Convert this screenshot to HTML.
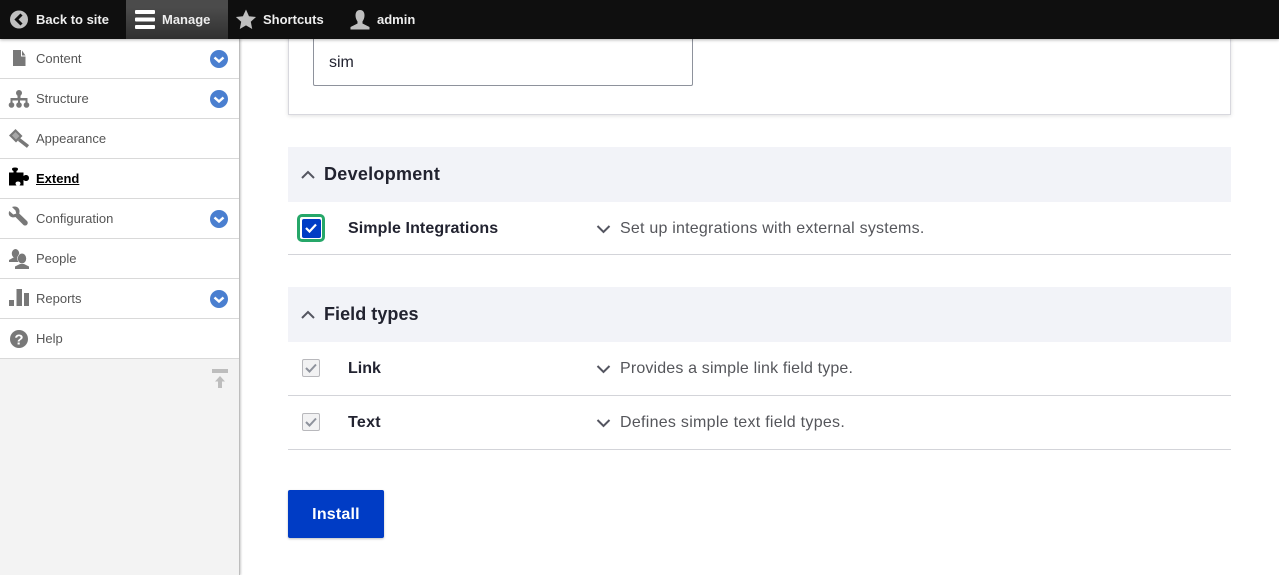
<!DOCTYPE html>
<html><head><meta charset="utf-8"><style>
*{box-sizing:border-box}
html,body{margin:0;padding:0;width:1279px;height:575px;overflow:hidden;background:#fff;font-family:"Liberation Sans",sans-serif}
.a{position:absolute;white-space:nowrap}
#bar{left:0;top:0;width:1279px;height:39px;background:#0f0f0f;box-shadow:0 1px 3px rgba(0,0,0,.3);z-index:5}
#mg{left:126px;top:0;width:102px;height:39px;background:linear-gradient(#4b4b4b 20%,#303030 100%)}
.t{top:11px;font-size:13px;font-weight:700;color:#eee;line-height:18px}
#side{left:0;top:39px;width:240px;height:536px;background:#f3f3f3;border-right:1px solid #bdbdbd;box-shadow:1px 0 2px rgba(0,0,0,.2);z-index:4}
.it{position:absolute;left:0;width:239px;height:40px;background:#fff;border-bottom:1px solid #d9d9d9;}
.it span{position:absolute;left:36px;top:11px;font-size:13px;line-height:17px;color:#565656}
.h{background:#f2f3f8;left:288px;width:943px;height:55px}
.hr{left:288px;width:943px;height:1px;background:#d3d4d9}
.ti{font-weight:700;color:#222330;font-size:18px;line-height:22px}
.nm{font-weight:700;color:#222330;font-size:16px;line-height:20px}
.ds{color:#55565b;font-size:16px;line-height:20px}
.cb{left:302px;width:18px;height:18px;background:#f2f2f3;border:1px solid #b8b8bc;border-radius:2px}
svg{position:absolute;overflow:visible}
</style></head><body>
<div class="a" id="box" style="left:288px;top:30px;width:943px;height:85px;background:#fff;border:1px solid #d8d8de;border-top:0;box-shadow:0 1px 4px rgba(0,0,0,.12)"></div>
<div class="a" style="left:313px;top:30px;width:380px;height:56px;background:#fff;border:1px solid #8e929c;border-radius:2px"></div>
<div class="a" style="left:329px;top:53px;font-size:16px;line-height:20px;color:#222330">sim</div>

<div class="a h" style="top:147px"></div>
<div class="a h" style="top:287px"></div>
<svg style="left:0;top:0" width="1279" height="575"><g fill="none" stroke="#545560" stroke-width="2"><path d="M302 178l6-6 6 6"/><path d="M302 318l6-6 6 6"/><path d="M597.500 226l6 6 6-6"/><path d="M597.500 366l6 6 6-6"/><path d="M597.500 420l6 6 6-6"/></g></svg>
<div class="a ti" style="left:324px;top:163px;letter-spacing:.28px">Development</div>
<div class="a" style="left:297px;top:214px;width:28px;height:28px;border:3px solid #26a769;border-radius:5px;background:#fff"></div>
<div class="a" style="left:302px;top:219px;width:19px;height:19px;background:#003cc5;border-radius:2px"></div>
<svg style="left:0;top:0" width="400" height="300"><path d="M306 228l3.500 3.500 6.500-7" fill="none" stroke="#fff" stroke-width="2.200"/></svg>
<div class="a nm" style="left:348px;top:219px;letter-spacing:.09px">Simple Integrations</div>
<div class="a ds" style="left:620px;top:219px;letter-spacing:.22px">Set up integrations with external systems.</div>
<div class="a hr" style="top:254px"></div>

<div class="a ti" style="left:324px;top:303px;letter-spacing:.05px">Field types</div>
<div class="a cb" style="top:359px"></div>
<svg style="left:302px;top:359px" width="18" height="18"><path d="M4 9l3.500 3.500 6.500-7" fill="none" stroke="#8e929c" stroke-width="2"/></svg>
<div class="a nm" style="left:348px;top:359px">Link</div>
<div class="a ds" style="left:620px;top:359px;letter-spacing:.16px">Provides a simple link field type.</div>
<div class="a hr" style="top:395px"></div>
<div class="a cb" style="top:413px"></div>
<svg style="left:302px;top:413px" width="18" height="18"><path d="M4 9l3.500 3.500 6.500-7" fill="none" stroke="#8e929c" stroke-width="2"/></svg>
<div class="a nm" style="left:348px;top:413px;letter-spacing:.3px">Text</div>
<div class="a ds" style="left:620px;top:413px;letter-spacing:.28px">Defines simple text field types.</div>
<div class="a hr" style="top:449px"></div>
<div class="a" style="left:288px;top:490px;width:96px;height:48px;background:#003cc5;border-radius:2px;box-shadow:0 1px 2px rgba(0,0,0,.25);color:#fff;font-weight:700;font-size:16px;line-height:49px;text-align:center;letter-spacing:.2px">Install</div>

<div class="a" id="bar">
<div class="a" id="mg"></div>
<svg style="left:0;top:0" width="430" height="39">
<circle cx="19" cy="19.500" r="9" fill="#bfbfbf"/><path d="M21.500 14.500l-5 5 5 5" fill="none" stroke="#0f0f0f" stroke-width="3"/>
<rect x="135" y="10" width="20" height="4" rx="1" fill="#fff"/><rect x="135" y="17.500" width="20" height="4" rx="1" fill="#fff"/><rect x="135" y="25" width="20" height="4" rx="1" fill="#fff"/>
<path d="M246 9.500l3 6.700 7 .8-5.200 4.800 1.400 7.200-6.200-3.600-6.200 3.600 1.400-7.200L235.900 17l7-.8z" fill="#bfbfbf"/>
<path d="M360 10c3 0 4.500 2.300 4.500 5.500 0 2.500-1 4.500-2 6v2l7 3.500v2.500h-19V27l7-3.500v-2c-1-1.500-2-3.500-2-6 0-3.200 1.500-5.500 4.500-5.500z" fill="#bfbfbf"/>
</svg>
<div class="a t" style="left:36px">Back to site</div>
<div class="a t" style="left:162px">Manage</div>
<div class="a t" style="left:263px">Shortcuts</div>
<div class="a t" style="left:377px">admin</div>
</div>

<div class="a" id="side">
<div class="it" style="top:0"><span>Content</span></div>
<div class="it" style="top:40px"><span>Structure</span></div>
<div class="it" style="top:80px"><span>Appearance</span></div>
<div class="it" style="top:120px"><span style="color:#000;font-weight:700;text-decoration:underline">Extend</span></div>
<div class="it" style="top:160px"><span>Configuration</span></div>
<div class="it" style="top:200px"><span>People</span></div>
<div class="it" style="top:240px"><span>Reports</span></div>
<div class="it" style="top:280px"><span>Help</span></div>
<svg style="left:0;top:-39px" width="240" height="420">
<g fill="#787878">
<path d="M13 50h8v6.500h4.500V66H13zM22 50.500l3.500 5H22z"/>
<circle cx="19" cy="93" r="3"/><rect x="17.500" y="94" width="3" height="5"/><rect x="10.500" y="98" width="17" height="2.500"/><rect x="10.500" y="99" width="2" height="5"/><rect x="18" y="99" width="2" height="5"/><rect x="25.500" y="99" width="2" height="5"/><circle cx="11.500" cy="105" r="2.800"/><circle cx="19" cy="105" r="2.800"/><circle cx="26.500" cy="105" r="2.800"/>
<path d="M9 135.500l6.500-6.500 7 7-6.500 6.500z"/>
<path d="M12 135.500l3.500-3.500 4 4-3.500 3.500z" fill="#fff" opacity=".35"/>
<path d="M19 139.500l9 7" stroke="#787878" stroke-width="3.500" fill="none"/>
<path d="M9.300 211l4 3.500 3-1-.8-3-3.500-3.500c3-1.200 6-.2 7 2 .7 1.500.7 3 .2 4.500l7.800 7.500c1 1 1 2.800 0 3.800s-2.800 1-3.800 0l-7.700-7.800c-1.500.5-3.300.5-4.700-.3-2-1-2.600-3.300-1.500-5.700z"/>
<ellipse cx="15.500" cy="253.500" rx="3.700" ry="4.500"/><path d="M9 262v-2l4.500-2.500h4l3 2-1.500 2.500z"/>
<g stroke="#fff" stroke-width="1" paint-order="stroke"><ellipse cx="22" cy="258.500" rx="4.200" ry="5"/><path d="M15 269v-2.500l5-2.500h4l5 2.500v2.500z"/></g>
<rect x="9" y="300" width="5" height="6"/><rect x="16.500" y="289" width="5.500" height="17"/><rect x="24" y="293" width="5" height="13"/>
</g>
<circle cx="19" cy="339" r="9" fill="#787878"/>
<text x="19" y="344.500" font-family="Liberation Sans" font-size="15" font-weight="700" fill="#fff" text-anchor="middle">?</text>
<path d="M9 172.500h4.500v-1.500c-1-.5-1.500-1-1.500-2 0-1 1-1.500 3-1.500s3 .5 3 1.500c0 1-.5 1.500-1.500 2v1.500H23.500v3.500c1-.8 1.800-1 2.500-1 1.500 0 3 1 3 3s-1.500 3-3 3c-.7 0-1.500-.3-2.500-1v5.500H19.500c.7-1 1-1.500 1-2.200 0-1-1-1.800-2.500-1.800s-2.500.8-2.500 1.800c0 .7.300 1.200 1 2.200H9z" fill="#000"/>
<g>
<circle cx="219" cy="59" r="9" fill="#4a7fd0"/><path d="M214.500 57.500l4.500 4 4.500-4" fill="none" stroke="#fff" stroke-width="2.500"/>
<circle cx="219" cy="99" r="9" fill="#4a7fd0"/><path d="M214.500 97.500l4.500 4 4.500-4" fill="none" stroke="#fff" stroke-width="2.500"/>
<circle cx="219" cy="219" r="9" fill="#4a7fd0"/><path d="M214.500 217.500l4.500 4 4.500-4" fill="none" stroke="#fff" stroke-width="2.500"/>
<circle cx="219" cy="299" r="9" fill="#4a7fd0"/><path d="M214.500 297.500l4.500 4 4.500-4" fill="none" stroke="#fff" stroke-width="2.500"/>
</g>
<rect x="212" y="369" width="16" height="4" fill="#bdbdbd"/><path d="M220 376l5 5.500h-3v6.500h-4v-6.500h-3z" fill="#bdbdbd"/>
</svg>
</div>
</body></html>
